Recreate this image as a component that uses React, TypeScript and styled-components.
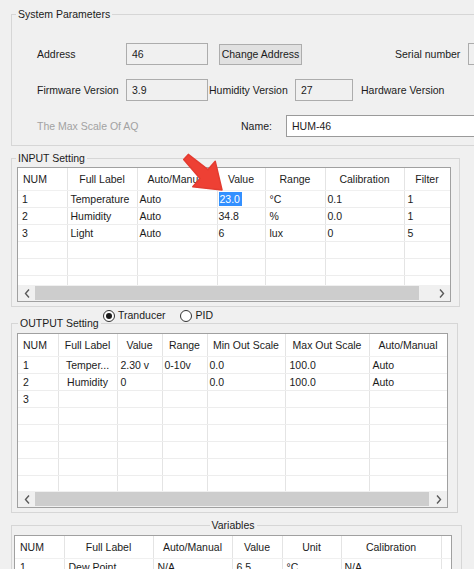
import styled, { createGlobalStyle } from 'styled-components'

const GlobalStyle = createGlobalStyle`
  html, body { margin: 0; padding: 0; overflow: hidden; background: #f0f0f0; }
  body {
    font-family: "Liberation Sans", Arial, sans-serif;
    font-size: 10.5px;
    line-height: 13px;
    color: #1b1b1b;
  }
`

type Col = { title: string; w: number; headLeft?: boolean; center?: boolean; pad?: number }

type GridProps = {
  cols: Col[];
  rows: string[][];
  width: number;
  height: number;
  thumb?: number;
  selected?: [number, number];
}

const inputCols: Col[] = [
  { title: 'NUM', w: 49, headLeft: true, pad: 4 },
  { title: 'Full Label', w: 70 },
  { title: 'Auto/Manual', w: 80, pad: 2 },
  { title: 'Value', w: 48, pad: 1 },
  { title: 'Range', w: 60, pad: 4 },
  { title: 'Calibration', w: 79, pad: 2 },
  { title: 'Filter', w: 46 },
]

const inputRows = [
  ['1', 'Temperature', 'Auto', '23.0', '°C', '0.1', '1'],
  ['2', 'Humidity', 'Auto', '34.8', '%', '0.0', '1'],
  ['3', 'Light', 'Auto', '6', 'lux', '0', '5'],
  [], [], [],
]

const outputCols: Col[] = [
  { title: 'NUM', w: 40, headLeft: true, pad: 5 },
  { title: 'Full Label', w: 59, center: true },
  { title: 'Value', w: 45 },
  { title: 'Range', w: 45, pad: 2 },
  { title: 'Min Out Scale', w: 78, pad: 2 },
  { title: 'Max Out Scale', w: 84, pad: 4 },
  { title: 'Auto/Manual', w: 78 },
]

const outputRows = [
  ['1', 'Temper...', '2.30 v', '0-10v', '0.0', '100.0', 'Auto'],
  ['2', 'Humidity', '0', '', '0.0', '100.0', 'Auto'],
  ['3'],
  [], [], [], [], [], [],
]

const varCols: Col[] = [
  { title: 'NUM', w: 49, headLeft: true, pad: 5 },
  { title: 'Full Label', w: 89, pad: 4 },
  { title: 'Auto/Manual', w: 79, pad: 4 },
  { title: 'Value', w: 50, pad: 4 },
  { title: 'Unit', w: 59, pad: 4 },
  { title: 'Calibration', w: 100, pad: 3 },
  { title: '', w: 10 },
]

const varRows = [
  ['1', 'Dew Point', 'N/A', '6.5', '°C', 'N/A', ''],
  [], [],
]

const Chevron = ({ left }: { left?: boolean }) => (
  <svg width="6" height="9" viewBox="0 0 6 9">
    <polyline
      points={left ? '5,0.5 1.5,4.5 5,8.5' : '1,0.5 4.5,4.5 1,8.5'}
      fill="none"
      stroke="#5a5a5a"
      strokeWidth="1.4"
    />
  </svg>
)

const DataGrid = ({ cols, rows, width, height, thumb, selected }: GridProps) => (
  <Frame $w={width} $h={height}>
    <TableArea>
      <Table>
        <colgroup>
          {cols.map((c, i) => <ColW key={i} $w={c.w} />)}
        </colgroup>
        <thead>
          <tr>
            {cols.map((c, i) => (
              <HeadCell key={i} $left={c.headLeft}>{c.title}</HeadCell>
            ))}
          </tr>
        </thead>
        <tbody>
          {rows.map((r, i) => (
            <BodyRow key={i}>
              {cols.map((c, j) => (
                <Cell key={j} $center={c.center} $pad={c.pad ?? 3}>
                  {selected && selected[0] === i && selected[1] === j
                    ? <Selected>{r[j]}</Selected>
                    : r[j]}
                </Cell>
              ))}
            </BodyRow>
          ))}
        </tbody>
      </Table>
    </TableArea>
    {thumb !== undefined && (
      <HScroll>
        <ScrollBtn><Chevron left /></ScrollBtn>
        <Thumb $w={thumb} />
        <Track />
        <ScrollBtn><Chevron /></ScrollBtn>
      </HScroll>
    )}
  </Frame>
)

export default function App() {
  return (
    <Page>
      <GlobalStyle />
      <GroupBox $w={540} $top={8} $pad="22px 0 8px 25px">
        <Caption $indent={-21}>System Parameters</Caption>
        <Fields>
          <FieldRow>
            <Label $w={89}>Address</Label>
            <ReadBox $w={82}>46</ReadBox>
            <Button $ml={11}>Change Address</Button>
            <Label $w={73} $ml={93}>Serial number</Label>
            <ReadBox $w={60} />
          </FieldRow>
          <FieldRow>
            <Label $w={89}>Firmware Version</Label>
            <ReadBox $w={82}>3.9</ReadBox>
            <Label $w={86} $ml={1}>Humidity Version</Label>
            <ReadBox $w={58}>27</ReadBox>
            <Label $ml={8}>Hardware Version</Label>
          </FieldRow>
          <FieldRow>
            <Label $w={204} $muted>The Max Scale Of AQ</Label>
            <Label $w={45}>Name:</Label>
            <ReadBox $w={220} $white>HUM-46</ReadBox>
          </FieldRow>
        </Fields>
      </GroupBox>

      <GroupBox $w={449} $top={6} $pad="2px 8px 4px 5px">
        <Caption $indent={-1}>INPUT Setting</Caption>
        <GridSlot>
          <DataGrid
            cols={inputCols}
            rows={inputRows}
            width={434}
            height={135}
            thumb={384}
            selected={[0, 3]}
          />
          <Pointer width="52" height="46" viewBox="178 148 52 46">
            <polygon
              points="188.3,154.4 208,169.6 215.25,161.35 222,190 192.75,186.85 200,178.6 183.7,159.6"
              fill="#ee4034"
              stroke="#e33b30"
              strokeWidth="1.5"
              strokeLinejoin="round"
            />
          </Pointer>
        </GridSlot>
      </GroupBox>

      <RadioBar>
        <RadioItem><Radio $on />Tranducer</RadioItem>
        <RadioItem $ml={15}><Radio />PID</RadioItem>
      </RadioBar>

      <GroupBox $w={447} $top={-5} $pad="3px 8px 4px 5px">
        <Caption $indent={1}>OUTPUT Setting</Caption>
        <DataGrid cols={outputCols} rows={outputRows} width={431} height={175} thumb={394} />
      </GroupBox>

      <GroupBox $w={451} $top={6} $pad="3px 9px 0 2px">
        <Caption $center>Variables</Caption>
        <DataGrid cols={varCols} rows={varRows} width={438} height={90} />
      </GroupBox>
    </Page>
  )
}

const Page = styled.div({
  width: 474,
  height: 569,
  overflow: 'hidden',
  display: 'flex',
  flexDirection: 'column',
  alignItems: 'flex-start',
})

const GroupBox = styled.fieldset<{ $w: number; $top: number; $pad: string }>(({ $w, $top, $pad }) => ({
  boxSizing: 'border-box',
  width: $w,
  minWidth: 0,
  flexShrink: 0,
  margin: `${$top}px 0 0 11px`,
  padding: $pad,
  border: '1px solid #d6d6d6',
}))

const Caption = styled.legend<{ $indent?: number; $center?: boolean }>(({ $indent, $center }) => ({
  padding: '0 2px',
  lineHeight: '13px',
  marginLeft: $center ? 'auto' : $indent,
  marginRight: $center ? 'auto' : 0,
}))

const Fields = styled.div({
  display: 'flex',
  flexDirection: 'column',
  gap: 14,
})

const FieldRow = styled.div({
  display: 'flex',
  alignItems: 'center',
  height: 22,
})

const Label = styled.span<{ $w?: number; $ml?: number; $muted?: boolean }>(({ $w, $ml, $muted }) => ({
  width: $w,
  marginLeft: $ml,
  flexShrink: 0,
  whiteSpace: 'nowrap',
  color: $muted ? '#a2a2a2' : '#1b1b1b',
}))

const ReadBox = styled.div<{ $w: number; $white?: boolean }>(({ $w, $white }) => ({
  boxSizing: 'border-box',
  width: $w,
  height: 22,
  flexShrink: 0,
  display: 'flex',
  alignItems: 'center',
  paddingLeft: 5,
  border: `1px solid ${$white ? '#9a9a9a' : '#acacac'}`,
  background: $white ? '#ffffff' : '#f0f0f0',
}))

const Button = styled.button<{ $ml?: number }>(({ $ml }) => ({
  boxSizing: 'border-box',
  width: 83,
  height: 21,
  flexShrink: 0,
  marginLeft: $ml,
  padding: 0,
  font: 'inherit',
  color: '#1b1b1b',
  background: '#e1e1e1',
  border: '1px solid #adadad',
}))

const GridSlot = styled.div({
  position: 'relative',
})

const Pointer = styled.svg({
  position: 'absolute',
  left: 161,
  top: -19,
})

const Frame = styled.div<{ $w: number; $h: number }>(({ $w, $h }) => ({
  boxSizing: 'border-box',
  width: $w,
  height: $h,
  display: 'flex',
  flexDirection: 'column',
  overflow: 'hidden',
  background: '#ffffff',
  border: '1px solid #a0a0a0',
}))

const TableArea = styled.div({
  flex: 1,
  overflow: 'hidden',
})

const Table = styled.table({
  borderCollapse: 'collapse',
  tableLayout: 'fixed',
  width: '100%',
})

const ColW = styled.col<{ $w: number }>(({ $w }) => ({
  width: $w,
}))

const HeadCell = styled.th<{ $left?: boolean }>(({ $left }) => ({
  height: 22,
  padding: $left ? '0 0 0 5px' : 0,
  fontWeight: 'normal',
  textAlign: $left ? 'left' : 'center',
  whiteSpace: 'nowrap',
  overflow: 'hidden',
  borderRight: '1px solid #e4e4e4',
  borderBottom: '1px solid #f0f0f0',
}))

const BodyRow = styled.tr({
  height: 17,
})

const Cell = styled.td<{ $center?: boolean; $pad: number }>(({ $center, $pad }) => ({
  padding: $center ? 0 : `0 0 0 ${$pad}px`,
  textAlign: $center ? 'center' : 'left',
  whiteSpace: 'nowrap',
  overflow: 'hidden',
  borderRight: '1px solid #e4e4e4',
  borderBottom: '1px solid #ededed',
}))

const Selected = styled.span({
  background: '#3390ff',
  color: '#ffffff',
  padding: '1px 2px 1px 1px',
})

const HScroll = styled.div({
  height: 16,
  flexShrink: 0,
  display: 'flex',
  background: '#f0f0f0',
})

const ScrollBtn = styled.div({
  width: 17,
  display: 'flex',
  alignItems: 'center',
  justifyContent: 'center',
})

const Thumb = styled.div<{ $w: number }>(({ $w }) => ({
  width: $w,
  margin: '1px 0',
  background: '#cdcdcd',
}))

const Track = styled.div({
  flex: 1,
})

const RadioBar = styled.div({
  display: 'flex',
  alignItems: 'center',
  height: 13,
  margin: '2px 0 0 103px',
})

const RadioItem = styled.label<{ $ml?: number }>(({ $ml }) => ({
  display: 'flex',
  alignItems: 'center',
  gap: 3,
  marginLeft: $ml,
}))

const Radio = styled.span<{ $on?: boolean }>(({ $on }) => ({
  boxSizing: 'border-box',
  width: 12,
  height: 12,
  borderRadius: '50%',
  border: '1px solid #333333',
  background: '#ffffff',
  display: 'flex',
  alignItems: 'center',
  justifyContent: 'center',
  '&::after': {
    content: '""',
    width: 6,
    height: 6,
    borderRadius: '50%',
    background: $on ? '#1b1b1b' : 'transparent',
  },
}))
